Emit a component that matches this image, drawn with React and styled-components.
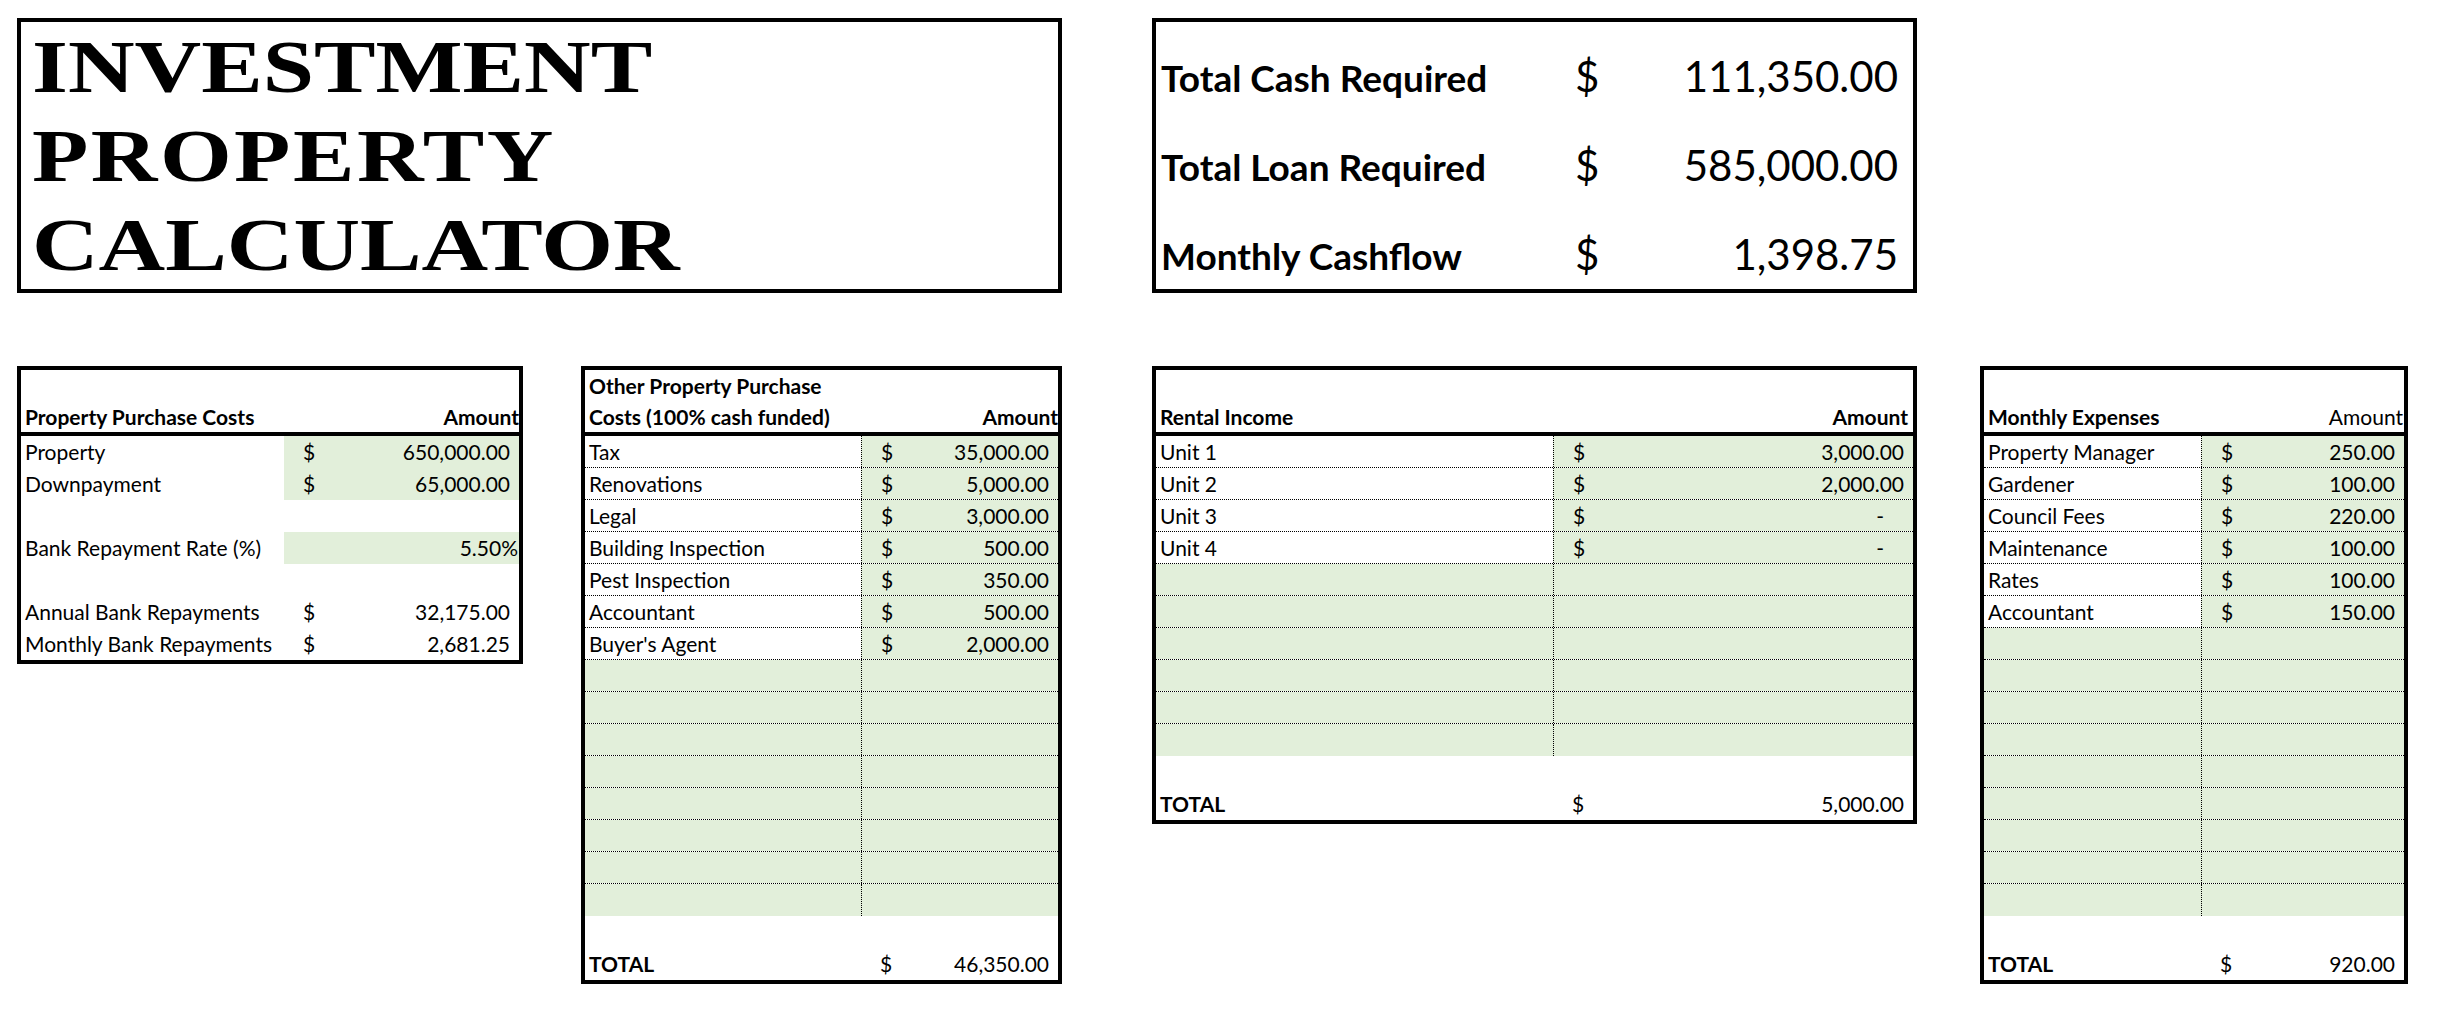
import React from 'react';
import styled, { createGlobalStyle } from 'styled-components';

const GREEN = '#e2efda';

const GlobalStyle = createGlobalStyle`
  html, body {
    margin: 0;
    padding: 0;
    background: #fff;
  }
  body {
    font-family: Lato, "Liberation Sans", sans-serif;
    color: #000;
  }
`;

const Page = styled.div`
  display: grid;
  grid-template-columns: 506px 58px 481px 90px 765px 63px 428px;
  row-gap: 73px;
  padding: 18px 0 0 17px;
  align-items: start;
`;

const TitleBox = styled.div`
  grid-column: 1 / 4;
  height: 275px;
  box-sizing: border-box;
  border: 4px solid #000;
  padding-left: 11px;
  overflow: hidden;
`;

const TitleLine = styled.div`
  height: 89px;
  line-height: 89px;
  font-family: "Liberation Serif", "Times New Roman", serif;
  font-weight: 700;
  font-size: 75px;
  letter-spacing: ${(p) => p.$spread}px;
  white-space: nowrap;
  transform: scaleX(1.23);
  transform-origin: left center;
`;

const SummaryBox = styled.div`
  grid-column: 5;
  height: 275px;
  box-sizing: border-box;
  border: 4px solid #000;
`;

const SummaryRow = styled.div`
  height: 89px;
  box-sizing: border-box;
  padding-top: 33px;
  display: flex;
  align-items: baseline;
`;

const SummaryLabel = styled.div`
  flex: 0 0 397px;
  box-sizing: border-box;
  padding-left: 5px;
  font-size: 37px;
  font-weight: 700;
  line-height: 1;
  white-space: nowrap;
`;

const SummaryValue = styled.div`
  flex: 1;
  display: flex;
  align-items: baseline;
  justify-content: space-between;
  padding: 0 15px 0 22px;
  font-size: 42px;
  line-height: 1;
`;

const Sheet = styled.div`
  grid-column: ${(p) => p.$col};
  border: 4px solid #000;
  display: flex;
  flex-direction: column;
`;

const Head = styled.div`
  border-bottom: 4px solid #000;
`;

const HeadRow = styled.div`
  display: grid;
  grid-template-columns: ${(p) => p.$split}px 1fr;
  height: 31px;
  line-height: 31px;
  font-size: 21px;
  font-weight: 700;
  white-space: nowrap;
`;

const HeadText = styled.div`
  padding-left: 4px;
`;

const HeadAmount = styled.div`
  text-align: right;
  padding-right: ${(p) => p.$pad}px;
  font-weight: ${(p) => (p.$plain ? 400 : 700)};
`;

const Row = styled.div`
  display: grid;
  grid-template-columns: ${(p) => p.$split}px 1fr;
  height: 32px;
  box-sizing: border-box;
  line-height: 31px;
  font-size: 21px;
  white-space: nowrap;
  border-bottom: ${(p) => (p.$ruled ? '1px dotted #000' : 'none')};
`;

const LabelCell = styled.div`
  padding-left: 4px;
  background: ${(p) => (p.$fill ? GREEN : 'transparent')};
  font-weight: ${(p) => (p.$bold ? 700 : 400)};
`;

const ValueCell = styled.div`
  display: flex;
  justify-content: space-between;
  padding: 0 ${(p) => p.$right}px 0 19px;
  background: ${(p) => (p.$fill ? GREEN : 'transparent')};
  border-left: ${(p) => (p.$divider ? '1px dotted #000' : 'none')};
`;

const Dollar = styled.span`
  flex: none;
`;

const Figure = styled.span`
  margin-left: auto;
`;

const Money = ({ sign, amount, fill, divider, right = 9 }) => (
  <ValueCell $fill={fill} $divider={divider} $right={right}>
    {sign && <Dollar>$</Dollar>}
    {amount && <Figure>{amount}</Figure>}
  </ValueCell>
);

const purchase = [
  { label: 'Property', amount: '650,000.00', sign: true, fill: true },
  { label: 'Downpayment', amount: '65,000.00', sign: true, fill: true },
  {},
  { label: 'Bank Repayment Rate (%)', amount: '5.50%', fill: true, right: 1 },
  {},
  { label: 'Annual Bank Repayments', amount: '32,175.00', sign: true },
  { label: 'Monthly Bank Repayments', amount: '2,681.25', sign: true },
];

const otherCosts = [
  ['Tax', '35,000.00'],
  ['Renovations', '5,000.00'],
  ['Legal', '3,000.00'],
  ['Building Inspection', '500.00'],
  ['Pest Inspection', '350.00'],
  ['Accountant', '500.00'],
  ["Buyer's Agent", '2,000.00'],
];

const rental = [
  ['Unit 1', '3,000.00'],
  ['Unit 2', '2,000.00'],
  ['Unit 3', '-'],
  ['Unit 4', '-'],
];

const expenses = [
  ['Property Manager', '250.00'],
  ['Gardener', '100.00'],
  ['Council Fees', '220.00'],
  ['Maintenance', '100.00'],
  ['Rates', '100.00'],
  ['Accountant', '150.00'],
];

const LedgerTable = ({ col, split, titleTop, title, amountPad, amountPlain, items, rows, total }) => {
  const body = Array.from({ length: rows }, (_, i) => items[i] || null);
  return (
    <Sheet $col={col}>
      <Head>
        <HeadRow $split={split}>
          <HeadText>{titleTop}</HeadText>
        </HeadRow>
        <HeadRow $split={split}>
          <HeadText>{title}</HeadText>
          <HeadAmount $pad={amountPad} $plain={amountPlain}>Amount</HeadAmount>
        </HeadRow>
      </Head>
      {body.map((item, i) => (
        <Row key={i} $split={split} $ruled={i < rows - 1}>
          <LabelCell $fill={!item}>{item ? item[0] : ''}</LabelCell>
          <Money
            fill
            divider
            sign={!!item}
            amount={item ? item[1] : ''}
            right={item && item[1] === '-' ? 29 : 9}
          />
        </Row>
      ))}
      <Row $split={split} />
      <Row $split={split}>
        <LabelCell $bold>TOTAL</LabelCell>
        <Money sign amount={total} />
      </Row>
    </Sheet>
  );
};

const App = () => (
  <>
    <GlobalStyle />
    <Page>
      <TitleBox>
        <TitleLine $spread={0}>INVESTMENT</TitleLine>
        <TitleLine $spread={2}>PROPERTY</TitleLine>
        <TitleLine $spread={0}>CALCULATOR</TitleLine>
      </TitleBox>

      <SummaryBox>
        {[
          ['Total Cash Required', '111,350.00'],
          ['Total Loan Required', '585,000.00'],
          ['Monthly Cashflow', '1,398.75'],
        ].map(([label, value]) => (
          <SummaryRow key={label}>
            <SummaryLabel>{label}</SummaryLabel>
            <SummaryValue>
              <span>$</span>
              <span>{value}</span>
            </SummaryValue>
          </SummaryRow>
        ))}
      </SummaryBox>

      <Sheet $col={1}>
        <Head>
          <HeadRow $split={263} />
          <HeadRow $split={263}>
            <HeadText>Property Purchase Costs</HeadText>
            <HeadAmount $pad={0}>Amount</HeadAmount>
          </HeadRow>
        </Head>
        {purchase.map((r, i) => (
          <Row key={i} $split={263}>
            <LabelCell>{r.label}</LabelCell>
            <Money fill={r.fill} sign={r.sign} amount={r.amount} right={r.right} />
          </Row>
        ))}
      </Sheet>

      <LedgerTable
        col={3}
        split={276}
        titleTop="Other Property Purchase"
        title="Costs (100% cash funded)"
        amountPad={0}
        items={otherCosts}
        rows={15}
        total="46,350.00"
      />

      <LedgerTable
        col={5}
        split={397}
        title="Rental Income"
        amountPad={5}
        items={rental}
        rows={10}
        total="5,000.00"
      />

      <LedgerTable
        col={7}
        split={217}
        title="Monthly Expenses"
        amountPad={1}
        amountPlain
        items={expenses}
        rows={15}
        total="920.00"
      />
    </Page>
  </>
);

export default App;
